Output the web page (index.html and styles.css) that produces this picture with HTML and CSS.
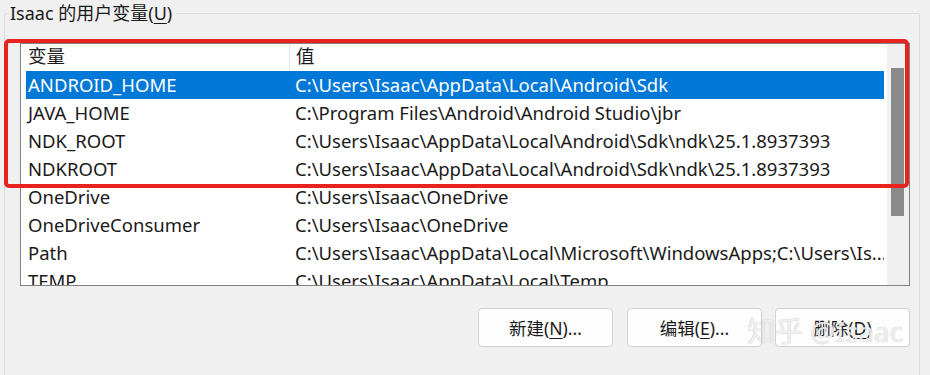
FILE: index.html
```html
<!DOCTYPE html>
<html lang="zh-CN">
<head>
    <meta charset="UTF-8">
    <title>环境变量</title>
    <link rel="stylesheet" href="styles.css">
</head>
<body>
    <fieldset class="group">
        <legend>Isaac 的用户变量(<u>U</u>)</legend>

        <div class="list">
            <div class="list-main">
                <div class="row head">
                    <div class="col-name">变量</div>
                    <div class="col-value">值</div>
                </div>
                <div class="row selected">
                    <div class="col-name">ANDROID_HOME</div>
                    <div class="col-value">C:\Users\Isaac\AppData\Local\Android\Sdk</div>
                </div>
                <div class="row">
                    <div class="col-name">JAVA_HOME</div>
                    <div class="col-value">C:\Program Files\Android\Android Studio\jbr</div>
                </div>
                <div class="row">
                    <div class="col-name">NDK_ROOT</div>
                    <div class="col-value">C:\Users\Isaac\AppData\Local\Android\Sdk\ndk\25.1.8937393</div>
                </div>
                <div class="row">
                    <div class="col-name">NDKROOT</div>
                    <div class="col-value">C:\Users\Isaac\AppData\Local\Android\Sdk\ndk\25.1.8937393</div>
                </div>
                <div class="row">
                    <div class="col-name">OneDrive</div>
                    <div class="col-value">C:\Users\Isaac\OneDrive</div>
                </div>
                <div class="row">
                    <div class="col-name">OneDriveConsumer</div>
                    <div class="col-value">C:\Users\Isaac\OneDrive</div>
                </div>
                <div class="row">
                    <div class="col-name">Path</div>
                    <div class="col-value">C:\Users\Isaac\AppData\Local\Microsoft\WindowsApps;C:\Users\Is...</div>
                </div>
                <div class="row">
                    <div class="col-name">TEMP</div>
                    <div class="col-value">C:\Users\Isaac\AppData\Local\Temp</div>
                </div>
            </div>
            <div class="scrollbar">
                <div class="thumb"></div>
            </div>
        </div>

        <div class="buttons">
            <button>新建(<u>N</u>)...</button>
            <button>编辑(<u>E</u>)...</button>
            <button>删除(<u>D</u>)</button>
        </div>
    </fieldset>

    <!-- 标注框 -->
    <div class="highlight"></div>
    <div class="watermark">知乎 @Isaac</div>
</body>
</html>
```

FILE: styles.css
```css
body {
    margin: 0;
    width: 930px;
    height: 375px;
    overflow: hidden;
    background: #f0f0f0;
    font-family: "Noto Sans", "Noto Sans CJK SC", sans-serif;
    font-size: 18.5px;
    color: #1a1a1a;
    position: relative;
}

u { text-decoration-thickness: 1px; text-underline-offset: 3px; }

/* 分组框 */
.group {
    margin: 0 0 0 4px;
    width: 916px;
    height: 375px;
    box-sizing: border-box;
    border: 1px solid #dcdcdc;
    border-radius: 2px;
    padding: 0 0 0 15px;
    position: relative;
    top: 3px;
}

.group legend {
    padding: 0 4px 0 1px;
    margin-left: -11px;
    line-height: 20px;
    font-size: 18px;
    color: #1a1a1a;
}

/* 列表 */
.list {
    margin-top: 20px;
    width: 890px;
    height: 243px;
    box-sizing: border-box;
    border: 1px solid #828282;
    background: #fff;
    display: flex;
    overflow: hidden;
}

.list-main {
    flex: 1;
    padding-left: 5px;
    overflow: hidden;
}

.row {
    display: flex;
    height: 28px;
    line-height: 28px;
    white-space: nowrap;
}

.row.head {
    height: 26px;
    line-height: 24px;
    margin-bottom: 1px;
}

.row.head .col-value {
    border-left: 1px solid #e5e5e5;
    padding-left: 6px;
}

.col-name {
    width: 261px;
    padding-left: 2px;
    flex: none;
}

.col-value {
    padding-left: 6px;
    overflow: hidden;
}

.row.selected {
    background: #0078d7;
    color: #fff;
}

/* 滚动条 */
.scrollbar {
    width: 22px;
    flex: none;
    margin-left: 3px;
    background: #f0f0f0;
    padding: 24px 5px 0 4px;
    box-sizing: border-box;
}

.thumb {
    height: 148px;
    background: #8a8a8a;
}

/* 按钮 */
.buttons {
    display: flex;
    justify-content: flex-end;
    gap: 14px;
    margin-top: 22px;
    width: 890px;
}

.buttons button {
    width: 135px;
    height: 39px;
    background: #fdfdfd;
    border: 1px solid #d0d0d0;
    border-radius: 4px;
    font-family: inherit;
    font-size: 17.5px;
    color: #1a1a1a;
}

.buttons button:last-child { margin-left: -1px; }

/* 红色标注 */
.highlight {
    position: absolute;
    left: 4px;
    top: 39px;
    width: 897px;
    height: 141px;
    border: 4px solid #e8231f;
    border-radius: 5px;
}

.watermark {
    position: absolute;
    left: 747px;
    top: 310px;
    font-size: 28px;
    color: rgba(255, 255, 255, 0.8);
    text-shadow: 0 0 1px rgba(120, 120, 120, 0.6);
}
```
